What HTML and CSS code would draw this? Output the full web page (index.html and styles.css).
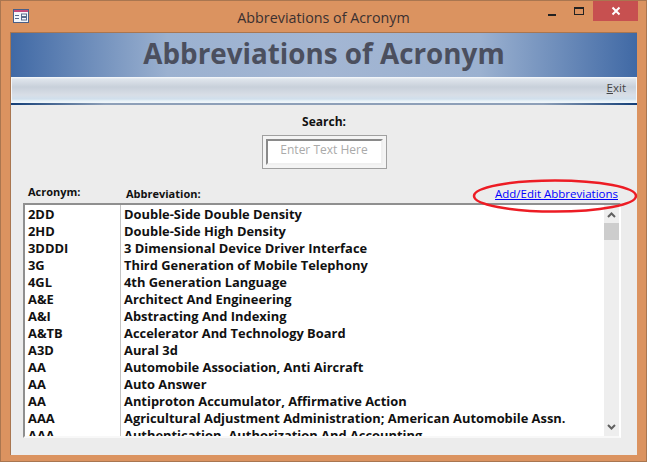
FILE: index.html
```html
<!DOCTYPE html>
<html lang="en">
<head>
    <meta charset="UTF-8">
    <title>Abbreviations of Acronym</title>
    <link rel="stylesheet" href="styles.css">
</head>
<body>
    <div class="window">
        <div class="titlebar">
            <svg class="app-icon" width="16" height="14" viewBox="0 0 16 14">
                <rect x="0.5" y="0.5" width="15" height="13" fill="#f4f7fb" stroke="#4a5f86"/>
                <rect x="1" y="1" width="14" height="2" fill="#c2497a"/>
                <path d="M2 6.5h4M2 9.5h4" stroke="#5a6c8c"/>
                <rect x="8.5" y="5" width="5" height="2.5" fill="none" stroke="#5a6c8c"/>
                <rect x="8.5" y="8.5" width="5" height="2.5" fill="none" stroke="#5a6c8c"/>
            </svg>
            <div class="title">Abbreviations of Acronym</div>
            <div class="controls">
                <div class="ctl"><span class="min"></span></div>
                <div class="ctl"><span class="max"></span></div>
                <div class="ctl close">
                    <svg width="10" height="10" viewBox="0 0 10 10"><path d="M1.5 1.5l7 7M8.5 1.5l-7 7" stroke="#fff" stroke-width="2"/></svg>
                </div>
            </div>
        </div>
        <div class="client">
            <div class="banner">Abbreviations of Acronym</div>
            <div class="toolbar"><span class="exit"><u>E</u>xit</span></div>
            <div class="rule"></div>
            <div class="search">
                <div class="search-label">Search:</div>
                <div class="search-box"><div class="search-input">Enter Text Here</div></div>
            </div>
            <div class="labels">
                <span class="lbl-acronym">Acronym:</span>
                <span class="lbl-abbr">Abbreviation:</span>
                <a class="add-link" href="#">Add/Edit Abbreviations</a>
                <svg class="circle" width="166" height="36" viewBox="0 0 166 36">
                    <ellipse cx="83" cy="18" rx="81" ry="15.5" fill="none" stroke="#ed1c24" stroke-width="2.5"/>
                </svg>
            </div>
            <div class="list">
                <div class="rows">
                    <div class="row"><span>2DD</span><span>Double-Side Double Density</span></div>
                    <div class="row"><span>2HD</span><span>Double-Side High Density</span></div>
                    <div class="row"><span>3DDDI</span><span>3 Dimensional Device Driver Interface</span></div>
                    <div class="row"><span>3G</span><span>Third Generation of Mobile Telephony</span></div>
                    <div class="row"><span>4GL</span><span>4th Generation Language</span></div>
                    <div class="row"><span>A&amp;E</span><span>Architect And Engineering</span></div>
                    <div class="row"><span>A&amp;I</span><span>Abstracting And Indexing</span></div>
                    <div class="row"><span>A&amp;TB</span><span>Accelerator And Technology Board</span></div>
                    <div class="row"><span>A3D</span><span>Aural 3d</span></div>
                    <div class="row"><span>AA</span><span>Automobile Association, Anti Aircraft</span></div>
                    <div class="row"><span>AA</span><span>Auto Answer</span></div>
                    <div class="row"><span>AA</span><span>Antiproton Accumulator, Affirmative Action</span></div>
                    <div class="row"><span>AAA</span><span>Agricultural Adjustment Administration; American Automobile Assn.</span></div>
                    <div class="row"><span>AAA</span><span>Authentication, Authorization And Accounting</span></div>
                </div>
                <div class="scrollbar">
                    <svg width="9" height="6" viewBox="0 0 9 6"><path d="M1 5l3.5-3.5L8 5" fill="none" stroke="#606060" stroke-width="2"/></svg>
                    <div class="thumb"></div>
                    <svg class="down" width="9" height="6" viewBox="0 0 9 6"><path d="M1 1l3.5 3.5L8 1" fill="none" stroke="#606060" stroke-width="2"/></svg>
                </div>
            </div>
        </div>
    </div>
</body>
</html>
```

FILE: styles.css
```css
* {
    box-sizing: border-box;
}

body {
    margin: 0;
    width: 648px;
    height: 462px;
    overflow: hidden;
    background-color: #fff;
    font-family: "Open Sans", "Liberation Sans", sans-serif;
}

.window {
    width: 647px;
    height: 462px;
    background-color: #db9360;
    border: 1px solid #a97650;
    display: flex;
    flex-direction: column;
    padding: 0 9px 6px 9px;
}

.titlebar {
    height: 31px;
    flex: none;
    position: relative;
    display: flex;
    justify-content: center;
    align-items: center;
}

.app-icon {
    position: absolute;
    left: 3px;
    top: 8px;
}

.title {
    font-size: 14.3px;
    color: #3a3030;
    margin-top: 2px;
}

.controls {
    position: absolute;
    right: -1px;
    top: 0;
    display: flex;
}

.ctl {
    width: 27px;
    height: 20px;
    display: flex;
    justify-content: center;
    align-items: center;
}

.ctl.close {
    width: 45px;
    background-color: #c75050;
    margin-left: 1px;
}

.min {
    width: 8px;
    height: 2px;
    margin-top: 7px;
    background-color: #222;
}

.max {
    width: 10px;
    height: 8px;
    border: 1px solid #222;
    border-top-width: 2px;
}

.client {
    flex: 1;
    background-color: #ececec;
    border: 1px solid #a97650;
    border-width: 1px 0 0 1px;
    display: flex;
    flex-direction: column;
    min-height: 0;
}

.banner {
    height: 44px;
    flex: none;
    background: linear-gradient(to right, #4069a5 0%, #9bb1d0 25%, #a3b6d3 50%, #9bb1d0 75%, #4069a5 100%);
    color: #4b4f5e;
    font-size: 27.8px;
    font-weight: 700;
    text-align: center;
    line-height: 40px;
}

.toolbar {
    height: 26px;
    flex: none;
    background: linear-gradient(to bottom, #f8fafc 0, #dfe5ec 2px, #c8d0da 10px, #d8dee6 18px, #d0dfec 22px, #e8f2f8 24px, #f2f7fa 26px);
    border-left: 1px solid #f4f6f8;
    border-right: 1px solid #f4f6f8;
    display: flex;
    justify-content: flex-end;
    align-items: center;
    padding: 0 10px 6px 0;
}

.exit {
    font-size: 11.5px;
    color: #444;
}

.rule {
    height: 2px;
    flex: none;
    background: linear-gradient(to right, #123d76, #8d9fb8 15%, #8d9fb8 85%, #123d76);
}

.search {
    flex: none;
    display: flex;
    flex-direction: column;
    align-items: center;
    padding-top: 8px;
}

.search-label {
    font-size: 12px;
    font-weight: 700;
    color: #111;
    line-height: 17px;
}

.search-box {
    margin-top: 5px;
    width: 125px;
    height: 34px;
    border: 1px solid #a0a0a0;
    background-color: #f4f4f4;
    padding: 3px;
}

.search-input {
    height: 100%;
    background-color: #fff;
    border: 2px solid #8a8a8a;
    border-right-color: #f0f0f0;
    border-bottom-color: #f0f0f0;
    color: #aaa;
    font-size: 12px;
    text-align: center;
    line-height: 17px;
}

.labels {
    flex: none;
    height: 34px;
    position: relative;
    display: flex;
    align-items: flex-end;
    padding: 0 19px 0 17px;
    font-size: 11px;
    font-weight: 700;
    color: #111;
}

.lbl-acronym {
    width: 98px;
    margin-bottom: 4px;
}

.lbl-abbr {
    flex: 1;
    margin-bottom: 2px;
}

.add-link {
    font-size: 11.5px;
    font-weight: 400;
    color: #0000ff;
    margin-bottom: 2px;
}

.circle {
    position: absolute;
    right: -1px;
    top: 9px;
}

.list {
    width: 598px;
    height: 235px;
    margin-left: 12px;
    flex: none;
    background-color: #fff;
    border: 2px solid #8f8f8f;
    border-right: 2px solid #fff;
    border-bottom: 2px solid #fff;
    border-bottom-color: #f8f8f8;
    display: flex;
    overflow: hidden;
}

.rows {
    flex: 1;
    min-width: 0;
    background: linear-gradient(#c4c4c4, #c4c4c4) no-repeat 95px 0 / 1px 100%;
}

.row {
    display: flex;
    height: 17px;
    align-items: center;
    font-size: 12.9px;
    font-weight: 700;
    color: #111;
    white-space: nowrap;
}

.row span:first-child {
    width: 99px;
    padding-left: 3px;
    flex: none;
}

.scrollbar {
    width: 15px;
    flex: none;
    background-color: #eeeeee;
    display: flex;
    flex-direction: column;
    align-items: center;
    padding: 7px 0 6px;
}

.thumb {
    width: 15px;
    height: 17px;
    margin-top: 5px;
    background-color: #cdcdcd;
}

.down {
    margin-top: auto;
}
```
